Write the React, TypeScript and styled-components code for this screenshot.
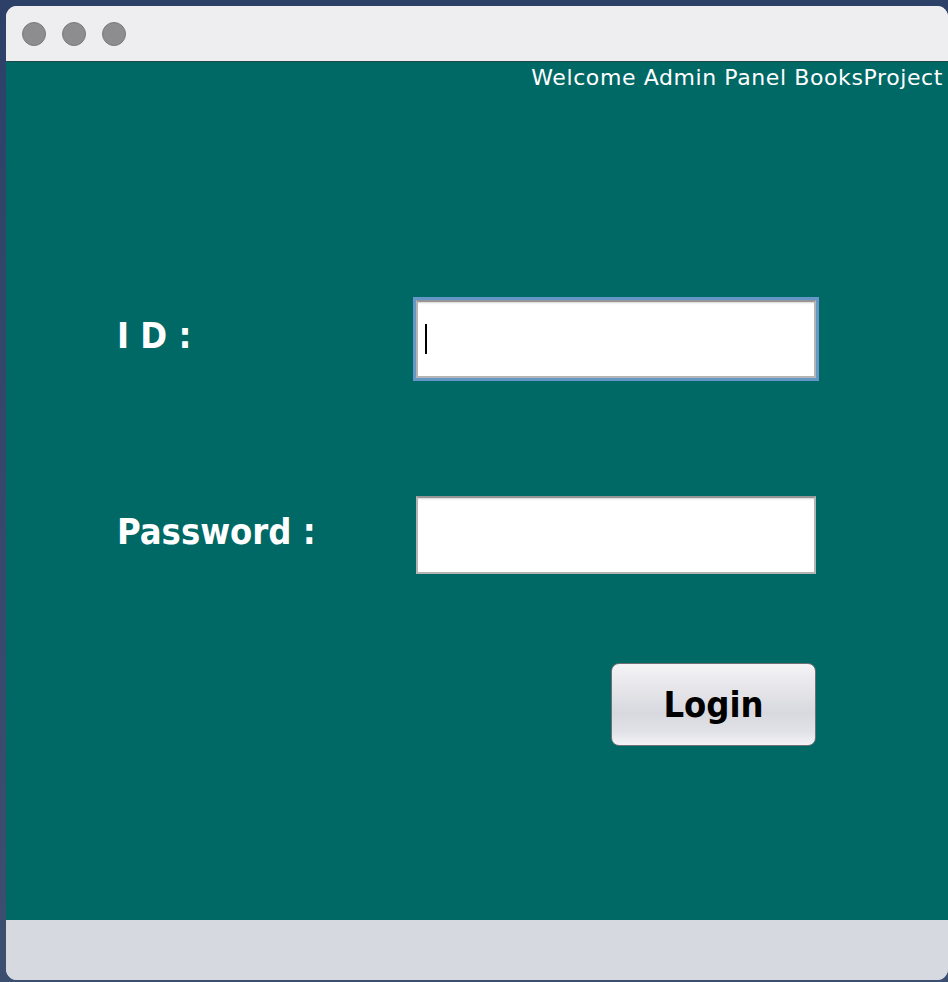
import React from "react";
import styled, { createGlobalStyle } from "styled-components";

const Global = createGlobalStyle`
  html, body {
    margin: 0;
    padding: 0;
    height: 100%;
  }
  body {
    background: linear-gradient(180deg, #2d4068 0%, #34476b 40%, #3c4f70 100%);
    font-family: "DejaVu Sans", "Liberation Sans", sans-serif;
    overflow: hidden;
  }
`;

const Window = styled.div`
  margin: 6px 0 0 6px;
  width: 942px;
  height: 974px;
  border-radius: 11px;
  overflow: hidden;
  display: flex;
  flex-direction: column;
  background: #d6d9e0;
`;

const TitleBar = styled.div`
  height: 55px;
  background: #eeeef0;
  border-bottom: 1px solid #1d4a49;
  display: flex;
  align-items: center;
  gap: 16px;
  padding-left: 16px;
  flex-shrink: 0;
`;

const Light = styled.span`
  width: 22px;
  height: 22px;
  border-radius: 50%;
  background: #8d8d8f;
  border: 1px solid #7a7a7c;
`;

const Content = styled.div`
  height: 858px;
  background: #006865;
  display: flex;
  flex-direction: column;
  flex-shrink: 0;
`;

const Welcome = styled.div`
  height: 30px;
  padding-right: 5px;
  text-align: right;
  color: #ffffff;
  font-family: "DejaVu Sans", sans-serif;
  font-size: 22px;
  line-height: 32px;
  letter-spacing: 0.6px;
  white-space: nowrap;
`;

const Row = styled.div<{ $top: number }>`
  display: grid;
  grid-template-columns: 299px 400px;
  align-items: center;
  margin-top: ${(p) => p.$top}px;
  padding-left: 111px;
`;

const Label = styled.label`
  color: #ffffff;
  font-family: "DejaVu Sans Condensed", "DejaVu Sans", sans-serif;
  font-weight: bold;
  font-size: 36px;
  line-height: 40px;
  margin-top: -6px;
  white-space: pre;
`;

const Field = styled.div<{ $focused?: boolean }>`
  box-sizing: border-box;
  height: 78px;
  background: #ffffff;
  border: 2px solid #b4b4b4;
  border-top-color: #959595;
  box-shadow: inset 0 2px 2px -1px #d6d6d6
    ${(p) => (p.$focused ? ", 0 0 0 3px #6597c6" : "")};
  display: flex;
  align-items: center;
  padding-left: 7px;
`;

const Caret = styled.span`
  width: 2px;
  height: 30px;
  background: #000000;
`;

const LoginButton = styled.button`
  justify-self: end;
  box-sizing: border-box;
  width: 205px;
  height: 83px;
  border: 1.5px solid #707074;
  border-radius: 8px;
  background: linear-gradient(180deg, #f4f4f7 0%, #e6e6ea 30%, #d8d9df 60%, #e2e3e8 85%, #f4f4f8 100%);
  font-family: "DejaVu Sans Condensed", "DejaVu Sans", sans-serif;
  font-weight: bold;
  font-size: 36px;
  color: #000000;
  padding: 0;
`;

const Footer = styled.div`
  flex: 1;
  background: #d6d9e0;
`;

export default function App() {
  return (
    <>
      <Global />
      <Window>
        <TitleBar>
          <Light />
          <Light />
          <Light />
        </TitleBar>
        <Content>
          <Welcome>Welcome Admin Panel BooksProject</Welcome>
          <Row $top={208}>
            <Label>I D :</Label>
            <Field $focused>
              <Caret />
            </Field>
          </Row>
          <Row $top={118}>
            <Label>Password :</Label>
            <Field />
          </Row>
          <Row $top={89}>
            <span />
            <LoginButton>Login</LoginButton>
          </Row>
        </Content>
        <Footer />
      </Window>
    </>
  );
}
